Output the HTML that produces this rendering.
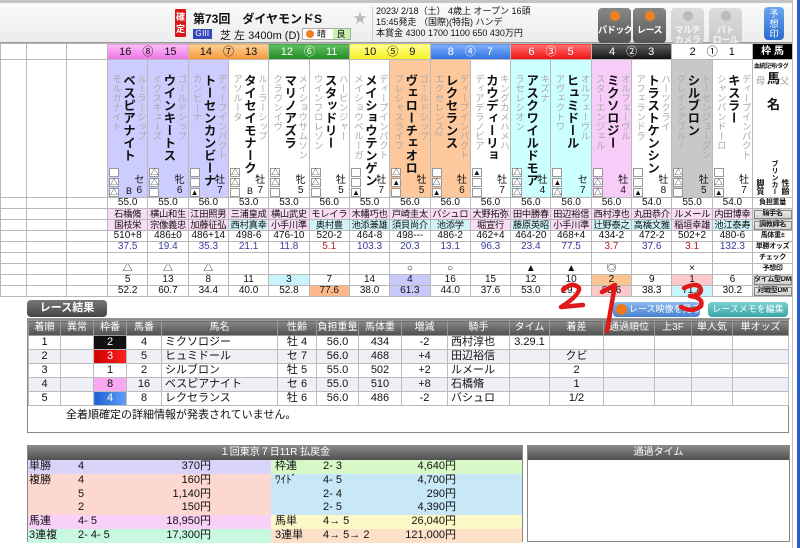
<!DOCTYPE html>
<html><head><meta charset="utf-8">
<style>
*{box-sizing:border-box;margin:0;padding:0}
body{width:800px;height:548px;overflow:hidden;background:#fff;font-family:"Liberation Sans","Noto Sans CJK JP",sans-serif;position:relative;color:#111}
.hdr{position:absolute;left:0;top:0;width:792px;height:43px;background:linear-gradient(#fafafa,#ececec);border-top:3px solid #c4c4c4;border-bottom:1px solid #999}
.kt{position:absolute;left:175px;top:6px;width:11px;height:28px;background:#d81818;color:#fff;font-size:9px;line-height:12px;text-align:center;font-weight:bold;padding-top:2px;border-radius:1px}
.ttl{position:absolute;left:193px;top:7px;font-size:12px;font-weight:bold;white-space:nowrap}
.g3{position:absolute;left:193px;top:26px;width:19px;height:10px;background:#3848b8;color:#fff;font-size:8px;line-height:10px;text-align:center}
.crs{position:absolute;left:220px;top:24px;font-size:11px;white-space:nowrap}
.wx{position:absolute;left:302px;top:25px;width:49px;height:12px;border:1px solid #aaa;background:#fff;font-size:9px;line-height:10px;white-space:nowrap;overflow:hidden}
.info{position:absolute;left:376px;top:3px;font-size:9px;line-height:11px;white-space:nowrap}
.btn{position:absolute;top:5px;width:33px;height:35px;border-radius:4px;background:linear-gradient(#888,#555);color:#fff;font-size:9px;font-weight:bold;text-align:center;line-height:10px;padding-top:17px;white-space:nowrap;letter-spacing:-0.5px}
.btn.dis{background:linear-gradient(#ddd,#c8c8c8);color:#f4f4f4}
.btn::before{content:"";position:absolute;left:12px;top:3px;width:10px;height:10px;border-radius:50%;background:#f08020}
.btn.dis::before{background:#bbb}
table{border-collapse:collapse;table-layout:fixed}
.grid{position:absolute;left:0;top:43px;width:792px}
.grid td{border:1px solid #b8b8b8;padding:0;text-align:center;font-size:10px;line-height:10px;height:11px;white-space:nowrap;overflow:hidden}
.jk td,.tr td{font-size:9.3px;letter-spacing:-0.3px}
.fr td{height:16px;font-size:11px;line-height:14px}
.n{height:138px!important;position:relative;vertical-align:top}
.n span{position:absolute;writing-mode:vertical-rl;top:14px;white-space:nowrap}
.d{left:2px;font-size:9.5px;color:#aaa;line-height:11px}
.m{left:12px;font-size:12.5px;font-weight:bold;line-height:15px}
.s{left:27px;font-size:9.5px;color:#aaa;line-height:11px}
.sx{position:absolute;right:3px;bottom:1px;font-size:10px;line-height:10px;font-style:normal;text-align:center}
.bb{position:absolute;left:18px;bottom:1px;font-size:9px;font-style:normal}
.bx{position:absolute;left:1px;bottom:0;width:10px}
.bx b{display:block;height:9px;border:1px solid #999;background:#fff;font-size:8px;line-height:8px;font-weight:normal;margin-top:1px}
.jk td{background:#fadcf5}
.tp{background:#fadcf5}.tc{background:#d0f4f8}
.grid td.lb{font-size:7px;font-weight:bold;letter-spacing:-0.3px}
.grid td.lbb{font-size:7px;font-weight:bold;letter-spacing:-0.3px;background:linear-gradient(#eee,#ccc);outline:1px solid #888;outline-offset:-2px}
.od{color:#3a3a9a}.or{color:#b02020}
.sb{position:absolute;right:0;top:0;width:8px;height:548px;background:#fff;border-left:1px solid #bbb}
.sb::after{content:"";position:absolute;right:0;top:0;width:3px;height:548px;background:#2a5cc8}
.rk{position:absolute;left:27px;top:300px;width:80px;height:17px;border-radius:4px;background:linear-gradient(#777,#444);color:#fff;font-size:11px;font-weight:bold;text-align:center;line-height:17px}
.vb{position:absolute;left:613px;top:302px;width:87px;height:15px;border-radius:4px;background:linear-gradient(#8ab8ee,#4a82d0);color:#fff;font-size:9px;line-height:15px;padding-left:16px;white-space:nowrap}
.vb::before{content:"";position:absolute;left:3px;top:2px;width:11px;height:11px;border-radius:50%;background:#f07818}
.mb{position:absolute;left:708px;top:302px;width:80px;height:15px;border-radius:4px;background:linear-gradient(#7ad0d0,#3aa4a8);color:#fff;font-size:9px;line-height:15px;text-align:center}
.res{position:absolute;left:27px;top:319px;width:762px;height:114px;border:1px solid #888}
.res table{width:760px}
.res th{background:linear-gradient(#888,#505050);color:#fff;font-weight:normal;font-size:10px;height:15px;border:1px solid #999;line-height:14px}
.res td{height:14px;border:1px solid #bbb;font-size:11px;line-height:13px;text-align:center;white-space:nowrap}
.res td.l{text-align:left;padding-left:3px}
.res tr.a td{background:#eef0f6}
.msg{position:absolute;left:38px;top:86px;font-size:11px}
.pay{position:absolute;left:27px;top:445px;width:496px;height:97px;border:1px solid #888}
.ph{height:14px;background:linear-gradient(#888,#505050);color:#fff;font-size:10px;line-height:14px;text-align:center}
.pr{position:absolute;height:13.8px;font-size:11px;line-height:13.8px;white-space:nowrap}
.pr i{position:absolute;font-style:normal}
.tt{position:absolute;left:527px;top:445px;width:263px;height:97px;border:1px solid #888}
</style></head><body>
<div class="hdr">
 <div class="kt">確<br>定</div>
 <div class="ttl">第73回　ダイヤモンドS</div>
 <div style="position:absolute;left:353px;top:5px;font-size:14px;color:#bbb">★</div>
 <div style="position:absolute;left:372px;top:4px;width:1px;height:34px;background:#ccc"></div>
 <div class="g3">GⅢ</div>
 <div class="crs">芝 左 3400m (D)</div>
 <div class="wx"><span style="display:inline-block;width:8px;height:8px;border-radius:50%;background:#f08020;margin:1px 3px 0 3px;vertical-align:top"></span>晴 <span style="background:#c8f0b0;padding:0 4px;margin-left:4px">良</span></div>
 <div class="info">2023/ 2/18（土） 4歳上 オープン 16頭<br>15:45発走 （国際)(特指) ハンデ<br>本賞金 4300 1700 1100 650 430万円</div>
 <div class="btn" style="left:598px">パドック</div>
 <div class="btn" style="left:633px">レース</div>
 <div class="btn dis" style="left:671px">マルチ<br>カメラ</div>
 <div class="btn dis" style="left:709px">パト<br>ロール</div>
 <div style="position:absolute;left:764px;top:4px;width:20px;height:33px;border-radius:4px;background:linear-gradient(#6aa8ee,#2a6ad0);color:#fff;font-size:9px;line-height:10px;text-align:center;padding-top:2px">予<br>想<br>印</div>
</div>

<table class="grid">
<colgroup><col style="width:26px"><col style="width:40px"><col style="width:41px">
<col span="16" style="width:40.3125px"><col style="width:40px"></colgroup>
<tr class="fr"><td></td><td></td><td></td>
<td colspan="2" style="background:linear-gradient(#fcc0f8,#f070e8)">16　⑧　15</td>
<td colspan="2" style="background:linear-gradient(#fcd098,#f89838)">14　⑦　13</td>
<td colspan="2" style="background:linear-gradient(#60c060,#208a20);color:#fff">12　⑥　11</td>
<td colspan="2" style="background:linear-gradient(#ffff90,#f4f020)">10　⑤　9</td>
<td colspan="2" style="background:linear-gradient(#80b0ff,#3070e0);color:#fff">8　④　7</td>
<td colspan="2" style="background:linear-gradient(#ff7070,#f01010);color:#fff">6　③　5</td>
<td colspan="2" style="background:linear-gradient(#606060,#101010);color:#fff">4　②　3</td>
<td colspan="2" style="background:#fff">2　①　1</td>
<td style="background:#000;color:#fff;font-weight:bold;font-size:10px">枠 馬</td></tr>

<tr><td class="n"></td><td class="n"></td><td class="n"></td>
<td class="n" style="background:#ccccff"><span class="d">モルガナイト</span><span class="m">ベスピアナイト</span><span class="s">ルーラーシップ</span><div class="bx"><b></b><b>△</b><b>△</b></div><i class="bb">B</i><i class="sx">セ<br>6</i></td>
<td class="n" style="background:#ccccff"><span class="d">イクスキューズ</span><span class="m">ウインキートス</span><span class="s">ゴールドシップ</span><div class="bx"><b>△</b><b>△</b><b></b></div><i class="sx">牝<br>6</i></td>
<td class="n" style="background:#ccccff"><span class="d">カンビーナ</span><span class="m">トーセンカンビーナ</span><span class="s">ディープインパクト</span><div class="bx"><b></b><b></b><b>▲</b></div><i class="sx">牡<br>7</i></td>
<td class="n"><span class="d">アソルータ</span><span class="m">タイセイモナーク</span><span class="s">ルーラーシップ</span><div class="bx"><b>△</b><b>△</b><b></b></div><i class="bb">B</i><i class="sx">牡<br>7</i></td>
<td class="n"><span class="d">クラウンイヴ</span><span class="m">マリノアズラ</span><span class="s">メイショウサムソン</span><div class="bx"><b>△</b><b>△</b><b></b></div><i class="sx">牝<br>5</i></td>
<td class="n"><span class="d">ウインフロレゾン</span><span class="m">スタッドリー</span><span class="s">ハービンジャー</span><div class="bx"><b>△</b><b>△</b><b></b></div><i class="sx">牡<br>5</i></td>
<td class="n"><span class="d">メイショウベルーガ</span><span class="m">メイショウテンゲン</span><span class="s">ディープインパクト</span><div class="bx"><b></b><b></b><b>▲</b></div><i class="sx">牡<br>7</i></td>
<td class="n" style="background:#fcc89c"><span class="d">プレシャスライフ</span><span class="m">ヴェローチェオロ</span><span class="s">ゴールドシップ</span><div class="bx"><b>△</b><b>▲</b><b></b></div><i class="sx">牡<br>5</i></td>
<td class="n" style="background:#fcc89c"><span class="d">エクセレンス2</span><span class="m">レクセランス</span><span class="s">ディープインパクト</span><div class="bx"><b></b><b>△</b><b>▲</b></div><i class="sx">牡<br>6</i></td>
<td class="n"><span class="d">ディアデラノビア</span><span class="m">カウディーリョ</span><span class="s">キングカメハメハ</span><div class="bx"><b>▲</b><b></b><b></b></div><i class="sx">牡<br>7</i></td>
<td class="n" style="background:#ccffff"><span class="d">ラセレシオン</span><span class="m">アスクワイルドモア</span><span class="s">キズナ</span><div class="bx"><b>△</b><b>△</b><b>△</b></div><i class="sx">牡<br>4</i></td>
<td class="n" style="background:#ccffff"><span class="d">アヴェクトワ</span><span class="m">ヒュミドール</span><span class="s">オルフェーヴル</span><div class="bx"><b></b><b>▲</b><b>△</b></div><i class="sx">セ<br>7</i></td>
<td class="n" style="background:#f8ccf8"><span class="d">スターエンジェル</span><span class="m">ミクソロジー</span><span class="s">オルフェーヴル</span><div class="bx"><b></b><b>△</b><b>△</b></div><i class="sx">牡<br>4</i></td>
<td class="n"><span class="d">アフェランドラ</span><span class="m">トラストケンシン</span><span class="s">ハーツクライ</span><div class="bx"><b></b><b></b><b>▲</b></div><i class="sx">牡<br>8</i></td>
<td class="n" style="background:#c8c8c8"><span class="d">グレイシアブルー</span><span class="m">シルブロン</span><span class="s">トーセンジョーダン</span><div class="bx"><b>△</b><b>△</b><b></b></div><i class="sx">牡<br>5</i></td>
<td class="n"><span class="d">シャンバンドーロ</span><span class="m">キスラー</span><span class="s">ディープインパクト</span><div class="bx"><b></b><b>△</b><b>▲</b></div><i class="sx">牡<br>7</i></td>
<td class="n" style="font-size:7px;font-weight:bold"><div style="position:absolute;top:2px;left:1px;font-size:6px;letter-spacing:-0.5px">血統記号/タグ</div><div style="position:absolute;top:16px;left:3px;font-size:9px;color:#999;font-weight:normal">母</div><div style="position:absolute;top:14px;left:14px;font-size:13px">馬</div><div style="position:absolute;top:16px;right:3px;font-size:9px;color:#999;font-weight:normal">父</div><div style="position:absolute;top:40px;left:14px;font-size:13px">名</div><div style="position:absolute;top:100px;left:16px;writing-mode:vertical-rl;font-size:7px">ブリンカー</div><div style="position:absolute;bottom:2px;left:2px;writing-mode:vertical-rl;font-size:8px">脚質</div><div style="position:absolute;bottom:2px;right:2px;writing-mode:vertical-rl;font-size:8px">性齢</div></td></tr>

<tr><td></td><td></td><td></td><td>55.0</td><td>55.0</td><td>56.0</td><td>53.0</td><td>53.0</td><td>56.0</td><td>55.0</td><td>56.0</td><td>56.0</td><td>56.0</td><td>56.0</td><td>56.0</td><td>56.0</td><td>54.0</td><td>55.0</td><td>54.0</td><td class="lb">負担重量</td></tr>
<tr class="jk"><td style="background:#fff"></td><td style="background:#fff"></td><td style="background:#fff"></td><td>石橋脩</td><td>横山和生</td><td>江田照男</td><td>三浦皇成</td><td>横山武史</td><td>モレイラ</td><td>木幡巧也</td><td>戸崎圭太</td><td>バシュロ</td><td>大野拓弥</td><td>田中勝春</td><td>田辺裕信</td><td>西村淳也</td><td>丸田恭介</td><td>ルメール</td><td>内田博幸</td><td class="lbb">騎手名</td></tr>
<tr class="tr"><td></td><td></td><td></td><td class="tp">国枝栄</td><td class="tp">宗像義忠</td><td class="tp">加藤征弘</td><td class="tc">西村真幸</td><td class="tp">小手川準</td><td class="tc">奥村豊</td><td class="tc">池添兼雄</td><td class="tc">須貝尚介</td><td class="tc">池添学</td><td class="tp">堀宣行</td><td class="tc">藤原英昭</td><td class="tp">小手川準</td><td class="tc">辻野泰之</td><td class="tc">高橋文雅</td><td class="tp">稲垣幸雄</td><td class="tc">池江泰寿</td><td class="lbb">調教師名</td></tr>
<tr><td></td><td></td><td></td><td>510+8</td><td>486±0</td><td>486+14</td><td>498-6</td><td>476-10</td><td>520-2</td><td>464-8</td><td>498---</td><td>486-2</td><td>462+4</td><td>464-20</td><td>468+4</td><td>434-2</td><td>472-2</td><td>502+2</td><td>480-6</td><td class="lb">馬体重±</td></tr>
<tr class="od"><td></td><td></td><td></td><td>37.5</td><td>19.4</td><td>35.3</td><td>21.1</td><td>11.8</td><td class="or">5.1</td><td>103.3</td><td>20.3</td><td>13.1</td><td>96.3</td><td>23.4</td><td>77.5</td><td class="or">3.7</td><td>37.6</td><td class="or">3.1</td><td>132.3</td><td class="lb" style="color:#111">単勝オッズ</td></tr>
<tr><td></td><td></td><td></td><td></td><td></td><td></td><td></td><td></td><td></td><td></td><td></td><td></td><td></td><td></td><td></td><td></td><td></td><td></td><td></td><td class="lb">チェック</td></tr>
<tr><td></td><td></td><td></td><td>△</td><td>△</td><td>△</td><td></td><td></td><td></td><td></td><td>○</td><td>○</td><td></td><td>▲</td><td>▲</td><td>◎</td><td></td><td>×</td><td></td><td class="lb">予想印</td></tr>
<tr><td></td><td></td><td></td><td>5</td><td>13</td><td>8</td><td>11</td><td style="background:#c8f4fc">3</td><td>7</td><td>14</td><td style="background:#c8c8fc">4</td><td>16</td><td>15</td><td>12</td><td>10</td><td style="background:#fcc490">2</td><td>9</td><td style="background:#fcc8cc">1</td><td>6</td><td class="lbb">タイム型DM</td></tr>
<tr><td></td><td></td><td></td><td>52.2</td><td>60.7</td><td>34.4</td><td>40.0</td><td>52.8</td><td style="background:#fcb888">77.6</td><td>38.0</td><td style="background:#c8c8fc">61.3</td><td>44.0</td><td>37.6</td><td>53.0</td><td>29.7</td><td style="background:#fcc8cc">83.6</td><td>38.3</td><td style="background:#c8f4fc">71.4</td><td>30.2</td><td class="lbb">対戦型DM</td></tr>
</table>

<div class="rk">レース結果</div>
<div style="position:absolute;left:27px;top:318px;width:763px;height:1px;background:#999"></div>
<div class="vb">レース映像を見る</div>
<div class="mb">レースメモを編集</div>

<div class="res"><table>
<colgroup><col style="width:32px"><col style="width:33px"><col style="width:33px"><col style="width:35px"><col style="width:116px"><col style="width:39px"><col style="width:42px"><col style="width:43px"><col style="width:46px"><col style="width:62px"><col style="width:40px"><col style="width:54px"><col style="width:51px"><col style="width:37px"><col style="width:41px"><col style="width:56px"></colgroup>
<tr><th>着順</th><th>異常</th><th>枠番</th><th>馬番</th><th>馬名</th><th>性齢</th><th>負担重量</th><th>馬体重</th><th>増減</th><th>騎手</th><th>タイム</th><th>着差</th><th>通過順位</th><th>上3F</th><th>単人気</th><th>単オッズ</th></tr>
<tr><td>1</td><td></td><td style="background:#111;color:#fff">2</td><td>4</td><td class="l">ミクソロジー</td><td>牡 4</td><td>56.0</td><td>434</td><td>-2</td><td class="l">西村淳也</td><td>3.29.1</td><td></td><td></td><td></td><td></td><td></td></tr>
<tr class="a"><td>2</td><td></td><td style="background:linear-gradient(90deg,#c00,#f22)!important;color:#fff">3</td><td>5</td><td class="l">ヒュミドール</td><td>セ 7</td><td>56.0</td><td>468</td><td>+4</td><td class="l">田辺裕信</td><td></td><td>クビ</td><td></td><td></td><td></td><td></td></tr>
<tr><td>3</td><td></td><td>1</td><td>2</td><td class="l">シルブロン</td><td>牡 5</td><td>55.0</td><td>502</td><td>+2</td><td class="l">ルメール</td><td></td><td>2</td><td></td><td></td><td></td><td></td></tr>
<tr class="a"><td>4</td><td></td><td style="background:#f8a8f0!important">8</td><td>16</td><td class="l">ベスピアナイト</td><td>セ 6</td><td>55.0</td><td>510</td><td>+8</td><td class="l">石橋脩</td><td></td><td>1</td><td></td><td></td><td></td><td></td></tr>
<tr><td>5</td><td></td><td style="background:linear-gradient(90deg,#2060d0,#60a0f8);color:#fff">4</td><td>8</td><td class="l">レクセランス</td><td>牡 6</td><td>56.0</td><td>486</td><td>-2</td><td class="l">バシュロ</td><td></td><td>1/2</td><td></td><td></td><td></td><td></td></tr>
</table>
<div class="msg">全着順確定の詳細情報が発表されていません。</div></div>

<div class="pay"><div class="ph">１回東京７日11R 払戻金</div>
<div class="pr" style="left:0;top:14px;width:243px;background:#d8d4fa"><i style="left:1px">単勝</i><i style="left:50px">4</i><i style="right:60px">370円</i></div>
<div class="pr" style="left:0;top:27.8px;width:243px;height:41.4px;background:#fcd8d0"><i style="left:1px">複勝</i><i style="left:50px">4</i><i style="right:60px">160円</i><i style="left:50px;top:13.8px">5</i><i style="right:60px;top:13.8px">1,140円</i><i style="left:50px;top:27.6px">2</i><i style="right:60px;top:27.6px">150円</i></div>
<div class="pr" style="left:0;top:69.2px;width:243px;background:#f8d0f8"><i style="left:1px">馬連</i><i style="left:50px">4- 5</i><i style="right:60px">18,950円</i></div>
<div class="pr" style="left:0;top:83px;width:243px;background:#c8f8e0"><i style="left:1px">3連複</i><i style="left:50px">2- 4- 5</i><i style="right:60px">17,300円</i></div>
<div class="pr" style="left:243px;top:14px;width:251px;background:#d8f8c8"><i style="left:4px">枠連</i><i style="left:52px">2- 3</i><i style="right:66px">4,640円</i></div>
<div class="pr" style="left:243px;top:27.8px;width:251px;height:41.4px;background:#c8e8f8"><i style="left:4px">ﾜｲﾄﾞ</i><i style="left:52px">4- 5</i><i style="right:66px">4,700円</i><i style="left:52px;top:13.8px">2- 4</i><i style="right:66px;top:13.8px">290円</i><i style="left:52px;top:27.6px">2- 5</i><i style="right:66px;top:27.6px">4,390円</i></div>
<div class="pr" style="left:243px;top:69.2px;width:251px;background:#fcf8c8"><i style="left:4px">馬単</i><i style="left:52px">4→ 5</i><i style="right:66px">26,040円</i></div>
<div class="pr" style="left:243px;top:83px;width:251px;background:#fce0c8"><i style="left:4px">3連単</i><i style="left:52px">4→ 5→ 2</i><i style="right:66px">121,000円</i></div>
</div>
<div class="tt"><div class="ph">通過タイム</div></div>

<div class="sb"></div>
<svg style="position:absolute;left:0;top:0" width="800" height="548">
<g fill="none" stroke="#e01818" stroke-width="4.5" stroke-linecap="round" stroke-linejoin="round">
<path d="M563 290 Q572 281 579 288 Q580 295 561 307 L583 305"/>
<path d="M602 292 L615 285 L607 331"/>
<path d="M684 288 Q699 281 701 290 Q700 296 690 296 Q704 298 701 306 Q693 313 681 307"/>
</g></svg>
</body></html>
